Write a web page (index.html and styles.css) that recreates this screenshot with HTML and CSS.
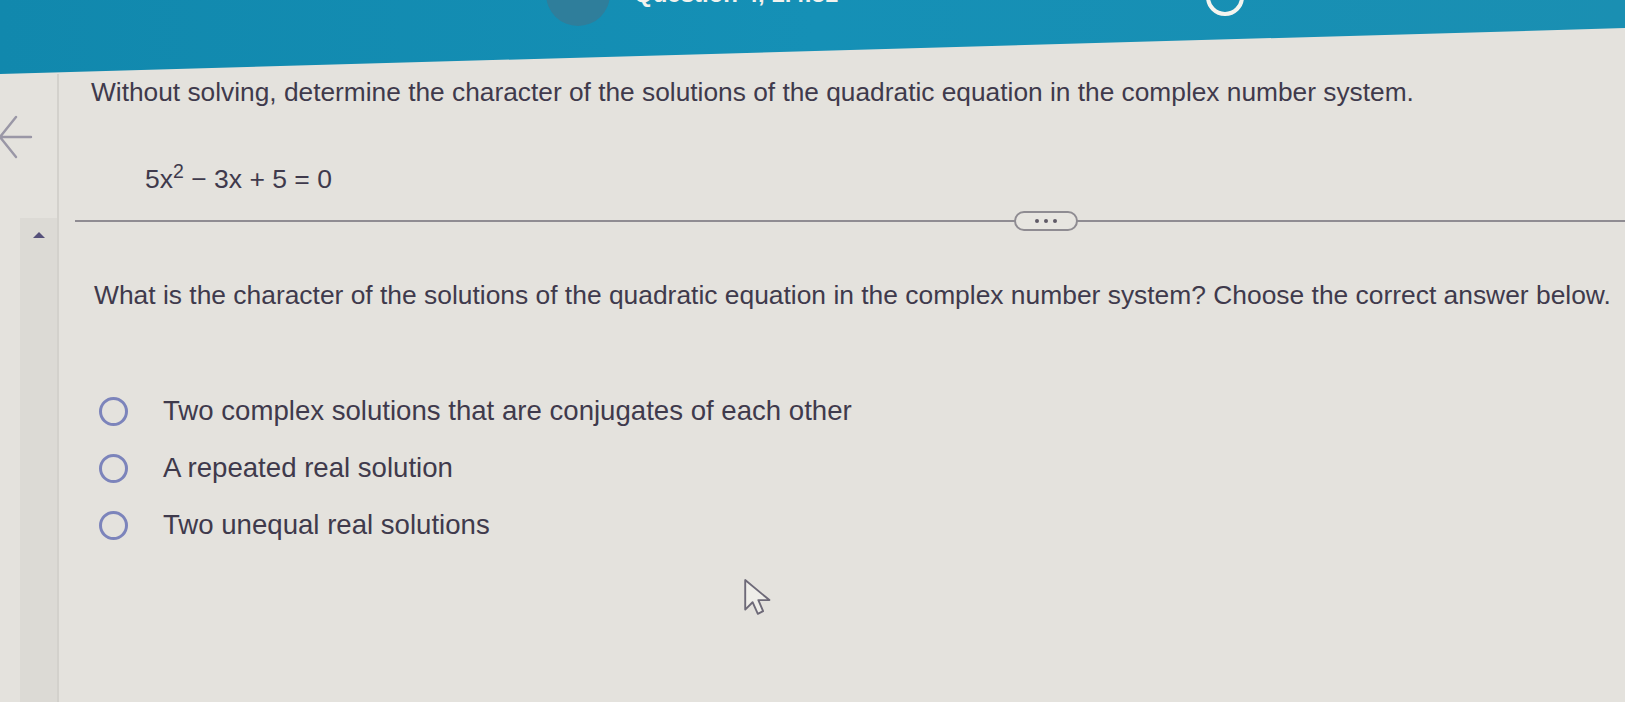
FILE: index.html
```html
<!DOCTYPE html>
<html>
<head>
<meta charset="utf-8">
<link rel="stylesheet" href="styles.css">
</head>
<body>
<div class="page">
  <header class="topbar">
    <div class="nav-circle"></div>
    <div class="qtitle">Question 4, 1.4.31</div>
    <div class="pts-ring"></div>
    <div class="pts">Points: 0 of 1</div>
  </header>
  <div class="body-row">
    <aside class="side">
      <svg class="back" width="36" height="46" viewBox="0 0 36 46"><path d="M18 3 L2 23 L18 43 M2 23 H33" fill="none" stroke="#9a97a6" stroke-width="2.4" stroke-linecap="round" stroke-linejoin="round"/></svg>
      <div class="scroll">
        <span class="tri"></span>
      </div>
    </aside>
    <main class="content">
      <p class="prompt">Without solving, determine the character of the solutions of the quadratic equation in the complex number system.</p>
      <p class="eq">5x<sup>2</sup> &minus; 3x + 5 = 0</p>
      <div class="divider"><span class="more"><i></i><i></i><i></i></span></div>
      <p class="question">What is the character of the solutions of the quadratic equation in the complex number system? Choose the correct answer below.</p>
      <ul class="options">
        <li><span class="radio"></span>Two complex solutions that are conjugates of each other</li>
        <li><span class="radio"></span>A repeated real solution</li>
        <li><span class="radio"></span>Two unequal real solutions</li>
      </ul>
      <div class="cursor-row">
        <svg class="cursor" width="36" height="40" viewBox="0 0 34 38"><path d="M2 2 L2 30 L9 23 L14 34 L19 31.5 L14.5 21 L25 21 Z" fill="#efeee9" stroke="#6e6a78" stroke-width="1.8" stroke-linejoin="round"/></svg>
      </div>
    </main>
  </div>
</div>
</body>
</html>
```

FILE: styles.css
```css
html, body {
  margin: 0;
  padding: 0;
}
body {
  width: 1625px;
  height: 702px;
  overflow: hidden;
  background: #e4e2dd;
  font-family: "Liberation Sans", Arial, sans-serif;
  color: #3f3a4c;
}
.page {
  display: flex;
  flex-direction: column;
  height: 702px;
}
.topbar {
  height: 74px;
  flex: none;
  display: flex;
  align-items: flex-start;
  background: linear-gradient(90deg, #1188ad 0%, #1590b6 50%, #1a8fb2 100%);
  clip-path: polygon(0 0, 100% 0, 100% 38%, 0 100%);
  overflow: hidden;
}
.nav-circle {
  width: 64px;
  height: 64px;
  border-radius: 50%;
  background: #2f7e9b;
  margin: -38px 0 0 546px;
  flex: none;
}
.qtitle {
  color: #f2f2ee;
  font-weight: bold;
  font-size: 24px;
  line-height: 28px;
  margin: -20px 0 0 24px;
  white-space: nowrap;
}
.pts-ring {
  width: 30px;
  height: 30px;
  border: 4px solid #f4f4ef;
  border-radius: 50%;
  margin: -22px 0 0 368px;
  flex: none;
}
.pts {
  color: #f2f2ee;
  font-weight: bold;
  font-size: 24px;
  line-height: 28px;
  margin: -22px 0 0 16px;
  white-space: nowrap;
}
.body-row {
  flex: 1;
  display: flex;
}
.side {
  width: 57px;
  flex: none;
  border-right: 2px solid #d3d1cc;
  display: flex;
  flex-direction: column;
}
.back {
  margin: 40px 0 0 -2px;
}
.scroll {
  margin: 58px 0 0 20px;
  flex: 1;
  background: #dcdad5;
  display: flex;
  justify-content: center;
}
.tri {
  width: 0;
  height: 0;
  border-left: 6px solid transparent;
  border-right: 6px solid transparent;
  border-bottom: 6px solid #55507a;
  margin-top: 14px;
}
.content {
  flex: 1;
  padding: 0 0 0 32px;
  display: flex;
  flex-direction: column;
}
.prompt {
  margin: 4px 0 0 0;
  font-size: 26.3px;
  line-height: 28px;
  white-space: nowrap;
}
.eq {
  margin: 59px 0 0 54px;
  font-size: 26.5px;
  line-height: 28px;
}
.eq sup {
  font-size: 19.5px;
  vertical-align: 10px;
  line-height: 0;
}
.divider {
  margin: 27px 0 0 -16px;
  height: 2px;
  background: #8f8c92;
  display: flex;
  justify-content: center;
  align-items: center;
}
.more {
  width: 60px;
  height: 16px;
  border: 2px solid #8f8c92;
  border-radius: 10px;
  background: #e7e5e0;
  display: flex;
  justify-content: center;
  align-items: center;
  gap: 5px;
  margin-left: 392px;
}
.more i {
  width: 4px;
  height: 4px;
  border-radius: 50%;
  background: #5f5a66;
}
.question {
  margin: 58px 0 0 3px;
  font-size: 26.4px;
  line-height: 30px;
  white-space: nowrap;
}
.options {
  list-style: none;
  margin: 86px 0 0 8px;
  padding: 0;
  display: flex;
  flex-direction: column;
  gap: 27px;
}
.options li {
  display: flex;
  align-items: center;
  font-size: 27.6px;
  line-height: 30px;
}
.radio {
  width: 23px;
  height: 23px;
  border: 3px solid #7c84bb;
  border-radius: 50%;
  margin-right: 35px;
  flex: none;
}
.cursor-row {
  margin: 38px 0 0 652px;
}
```
